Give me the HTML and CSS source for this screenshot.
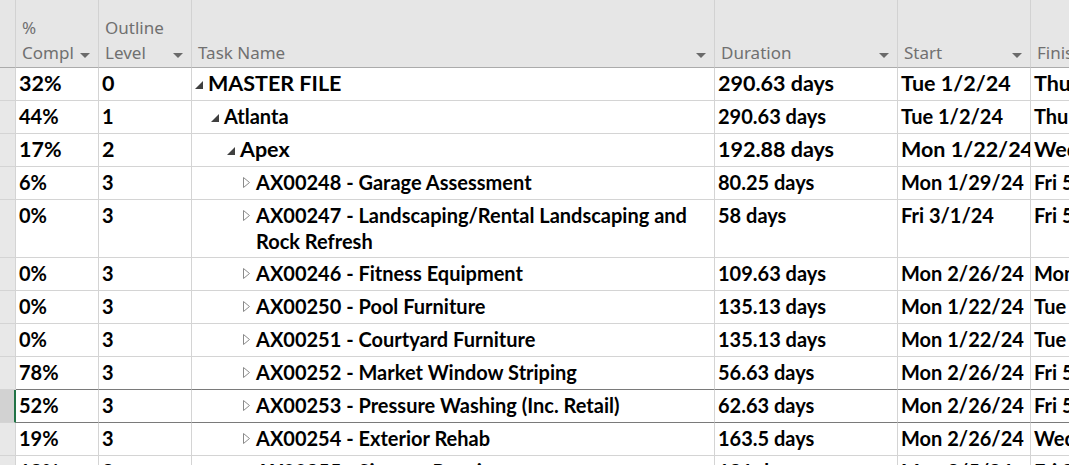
FILE: index.html
```html
<!DOCTYPE html>
<html lang="en">
<head>
  <meta charset="UTF-8">
  <title>Task Sheet</title>
  <link rel="stylesheet" href="styles.css">
</head>
<body>
  <div class="sheet">
    <!-- column headers -->
    <div class="row head">
      <div class="c g"></div>
      <div class="c"><span>%<br>Compl</span><i class="dd"></i></div>
      <div class="c"><span>Outline<br>Level</span><i class="dd"></i></div>
      <div class="c"><span>Task Name</span><i class="dd"></i></div>
      <div class="c"><span>Duration</span><i class="dd"></i></div>
      <div class="c"><span>Start</span><i class="dd"></i></div>
      <div class="c"><span>Finish</span><i class="dd"></i></div>
    </div>

    <div class="row big">
      <div class="c g"></div>
      <div class="c">32%</div>
      <div class="c">0</div>
      <div class="c task lv0"><span class="tg"><svg width="8" height="8" viewBox="0 0 8 8"><polygon points="8,0 8,8 0,8" fill="#404040"/></svg></span><span>MASTER FILE</span></div>
      <div class="c">290.63 days</div>
      <div class="c">Tue 1/2/24</div>
      <div class="c">Thu 12/12/24</div>
    </div>

    <div class="row">
      <div class="c g"></div>
      <div class="c">44%</div>
      <div class="c">1</div>
      <div class="c task lv1"><span class="tg"><svg width="8" height="8" viewBox="0 0 8 8"><polygon points="8,0 8,8 0,8" fill="#404040"/></svg></span><span>Atlanta</span></div>
      <div class="c">290.63 days</div>
      <div class="c">Tue 1/2/24</div>
      <div class="c">Thu 12/12/24</div>
    </div>

    <div class="row big">
      <div class="c g"></div>
      <div class="c">17%</div>
      <div class="c">2</div>
      <div class="c task lv2"><span class="tg"><svg width="8" height="8" viewBox="0 0 8 8"><polygon points="8,0 8,8 0,8" fill="#404040"/></svg></span><span>Apex</span></div>
      <div class="c">192.88 days</div>
      <div class="c">Mon 1/22/24</div>
      <div class="c">Wed 10/16/24</div>
    </div>

    <div class="row">
      <div class="c g"></div>
      <div class="c">6%</div>
      <div class="c">3</div>
      <div class="c task lv3"><span class="tg"><svg class="cl" width="8" height="11" viewBox="0 0 8 11"><polygon points="0.5,0.5 6.5,5.5 0.5,10.5" fill="none" stroke="#8a8a8a"/></svg></span><span>AX00248 - Garage Assessment</span></div>
      <div class="c">80.25 days</div>
      <div class="c">Mon 1/29/24</div>
      <div class="c">Fri 5/24/24</div>
    </div>

    <div class="row">
      <div class="c g"></div>
      <div class="c">0%</div>
      <div class="c">3</div>
      <div class="c task lv3"><span class="tg"><svg class="cl" width="8" height="11" viewBox="0 0 8 11"><polygon points="0.5,0.5 6.5,5.5 0.5,10.5" fill="none" stroke="#8a8a8a"/></svg></span><span>AX00247 - Landscaping/Rental Landscaping and Rock Refresh</span></div>
      <div class="c">58 days</div>
      <div class="c">Fri 3/1/24</div>
      <div class="c">Fri 5/17/24</div>
    </div>

    <div class="row">
      <div class="c g"></div>
      <div class="c">0%</div>
      <div class="c">3</div>
      <div class="c task lv3"><span class="tg"><svg class="cl" width="8" height="11" viewBox="0 0 8 11"><polygon points="0.5,0.5 6.5,5.5 0.5,10.5" fill="none" stroke="#8a8a8a"/></svg></span><span>AX00246 - Fitness Equipment</span></div>
      <div class="c">109.63 days</div>
      <div class="c">Mon 2/26/24</div>
      <div class="c">Mon 7/29/24</div>
    </div>

    <div class="row">
      <div class="c g"></div>
      <div class="c">0%</div>
      <div class="c">3</div>
      <div class="c task lv3"><span class="tg"><svg class="cl" width="8" height="11" viewBox="0 0 8 11"><polygon points="0.5,0.5 6.5,5.5 0.5,10.5" fill="none" stroke="#8a8a8a"/></svg></span><span>AX00250 - Pool Furniture</span></div>
      <div class="c">135.13 days</div>
      <div class="c">Mon 1/22/24</div>
      <div class="c">Tue 7/30/24</div>
    </div>

    <div class="row">
      <div class="c g"></div>
      <div class="c">0%</div>
      <div class="c">3</div>
      <div class="c task lv3"><span class="tg"><svg class="cl" width="8" height="11" viewBox="0 0 8 11"><polygon points="0.5,0.5 6.5,5.5 0.5,10.5" fill="none" stroke="#8a8a8a"/></svg></span><span>AX00251 - Courtyard Furniture</span></div>
      <div class="c">135.13 days</div>
      <div class="c">Mon 1/22/24</div>
      <div class="c">Tue 7/30/24</div>
    </div>

    <div class="row above">
      <div class="c g"></div>
      <div class="c">78%</div>
      <div class="c">3</div>
      <div class="c task lv3"><span class="tg"><svg class="cl" width="8" height="11" viewBox="0 0 8 11"><polygon points="0.5,0.5 6.5,5.5 0.5,10.5" fill="none" stroke="#8a8a8a"/></svg></span><span>AX00252 - Market Window Striping</span></div>
      <div class="c">56.63 days</div>
      <div class="c">Mon 2/26/24</div>
      <div class="c">Fri 5/17/24</div>
    </div>

    <div class="row sel">
      <div class="c g"></div>
      <div class="c">52%</div>
      <div class="c">3</div>
      <div class="c task lv3"><span class="tg"><svg class="cl" width="8" height="11" viewBox="0 0 8 11"><polygon points="0.5,0.5 6.5,5.5 0.5,10.5" fill="none" stroke="#8a8a8a"/></svg></span><span>AX00253 - Pressure Washing (Inc. Retail)</span></div>
      <div class="c">62.63 days</div>
      <div class="c">Mon 2/26/24</div>
      <div class="c">Fri 5/24/24</div>
    </div>

    <div class="row">
      <div class="c g"></div>
      <div class="c">19%</div>
      <div class="c">3</div>
      <div class="c task lv3"><span class="tg"><svg class="cl" width="8" height="11" viewBox="0 0 8 11"><polygon points="0.5,0.5 6.5,5.5 0.5,10.5" fill="none" stroke="#8a8a8a"/></svg></span><span>AX00254 - Exterior Rehab</span></div>
      <div class="c">163.5 days</div>
      <div class="c">Mon 2/26/24</div>
      <div class="c">Wed 10/16/24</div>
    </div>

    <div class="row">
      <div class="c g"></div>
      <div class="c">18%</div>
      <div class="c">3</div>
      <div class="c task lv3"><span class="tg"><svg class="cl" width="8" height="11" viewBox="0 0 8 11"><polygon points="0.5,0.5 6.5,5.5 0.5,10.5" fill="none" stroke="#8a8a8a"/></svg></span><span>AX00255 - Signage Repair</span></div>
      <div class="c">121 days</div>
      <div class="c">Mon 3/5/24</div>
      <div class="c">Fri 8/16/24</div>
    </div>
  </div>
</body>
</html>
```

FILE: styles.css
```css
html, body {
  margin: 0;
  height: 100%;
  overflow: hidden;
  background-color: #fff;
}

.sheet {
  width: 1240px;
  font-family: Lato, "Open Sans", sans-serif;
  font-weight: bold;
  font-size: 20px;
  color: #000;
}

.row {
  display: grid;
  grid-template-columns: 16px 83px 93px 523px 183px 133px 209px;
}

.c {
  box-sizing: border-box;
  min-height: 33px;
  border-right: 1px solid #d4d4d4;
  border-bottom: 1px solid #d4d4d4;
  padding: 2px 3px 3px 3px;
  line-height: 26px;
  white-space: nowrap;
  overflow: hidden;
}

/* left gutter (row selectors) */
.c.g {
  background-color: #e8e8e8;
  padding: 0;
}

/* header row */
.head .c {
  height: 68px;
  display: flex;
  align-items: flex-end;
  padding: 0 8px 2px 6px;
  background-color: #e6e6e6;
  border-right-color: #d2d2d2;
  border-bottom-color: #ababab;
  font-family: "Noto Sans", "Open Sans", sans-serif;
  font-weight: normal;
  font-size: 17px;
  line-height: 25px;
  color: #707070;
}

.head .c.g {
  padding: 0;
}

.dd {
  margin-left: auto;
  margin-bottom: 7px;
  width: 0;
  height: 0;
  border-left: 5px solid transparent;
  border-right: 5px solid transparent;
  border-top: 5px solid #6a6a6a;
}

.big .c {
  font-size: 21.5px;
}

.task {
  display: flex;
  align-items: flex-start;
  white-space: normal;
}

.tg {
  flex: none;
  width: 13px;
  height: 26px;
  display: flex;
  align-items: center;
}

.tg svg {
  margin-top: 3px;
}

.tg svg.cl {
  margin-top: 0;
}

.lv0 { padding-left: 3px; }
.lv1 { padding-left: 19px; }
.lv2 { padding-left: 35px; }
.lv3 { padding-left: 51px; }

/* selected row */
.above .c:not(.g),
.sel .c:not(.g) {
  border-bottom-color: #7a7a7a;
}

.sel .c.g {
  background-color: #d2d2d2;
  border-right: 2px solid #217346;
}
```
